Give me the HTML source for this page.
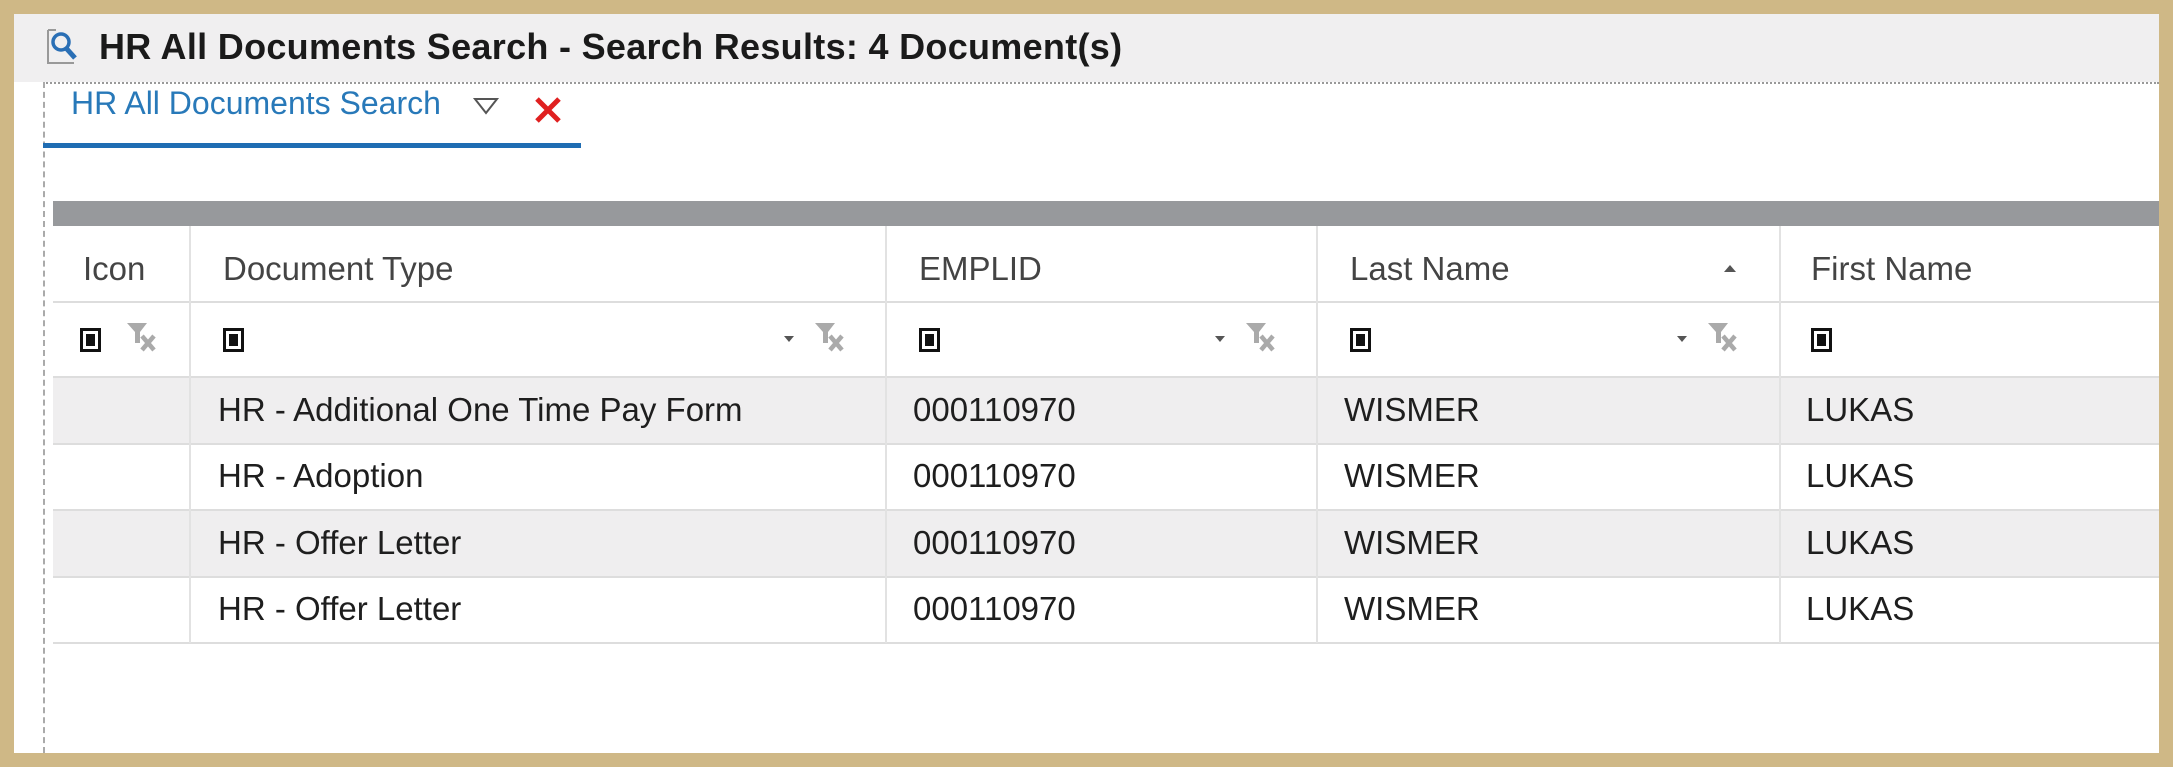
<!DOCTYPE html>
<html><head><meta charset="utf-8"><style>
*{margin:0;padding:0;box-sizing:border-box}
body{width:2173px;height:767px;background:#cfb886;position:relative;overflow:hidden;font-family:"Liberation Sans",sans-serif}
.a{position:absolute}
#win{left:14px;top:14px;width:2145px;height:739px;background:#fff}
.t{position:absolute;white-space:nowrap}
.hd{font-size:33px;color:#444}
.dt{font-size:33px;color:#1e1e1e}
.cb{position:absolute;width:21px;height:24px;border:3px solid #111;background:#fff}
.cb:after{content:"";position:absolute;left:3px;top:3px;width:9px;height:12px;background:#111}
.vl{position:absolute;width:2px;background:#e2e2e2;top:226px;height:417px}
.hl{position:absolute;left:53px;width:2106px;height:2px;background:#ddd}
</style></head><body>
<div class="a" id="win"></div>
<div class="a" style="left:14px;top:14px;width:2145px;height:68px;background:#f0eff0"></div>
<div class="a" style="left:43px;top:82px;width:2116px;border-top:2px dotted #999"></div>
<div class="a" style="left:43px;top:82px;height:671px;border-left:2px dashed #aaa"></div>
<svg class="a" style="left:44px;top:27px" width="42" height="40" viewBox="0 0 42 40"><path d="M4 3 L4 36 L30 36" fill="none" stroke="#999" stroke-width="2"/><path d="M4 3 L12 3" stroke="#999" stroke-width="2"/><circle cx="17" cy="15" r="8" fill="none" stroke="#2a6fb5" stroke-width="3.5"/><path d="M22 21 L31 31" stroke="#2a6fb5" stroke-width="5"/></svg>
<div class="t" style="left:99px;top:26px;font-size:36px;font-weight:bold;color:#1a1a1a;letter-spacing:0.3px">HR All Documents Search - Search Results: 4 Document(s)</div>
<div class="t" style="left:71px;top:85px;font-size:32px;color:#2879b9">HR All Documents Search</div>
<svg class="a" style="left:472px;top:96px" width="28" height="20"><path d="M3 3 L25 3 L14 17 Z" fill="none" stroke="#555" stroke-width="2"/></svg>
<svg class="a" style="left:533px;top:95px" width="30" height="30"><path d="M4 4 L26 26 M26 4 L4 26" stroke="#e02020" stroke-width="5"/></svg>
<div class="a" style="left:43px;top:143px;width:538px;height:5px;background:#1f6db3"></div>
<div class="a" style="left:53px;top:201px;width:2106px;height:25px;background:#97999c"></div>
<div class="a" style="left:53px;top:377px;width:2106px;height:67px;background:#efeeef"></div>
<div class="a" style="left:53px;top:510px;width:2106px;height:67px;background:#efeeef"></div>
<div class="hl" style="top:301px"></div><div class="hl" style="top:376px"></div><div class="hl" style="top:443px"></div><div class="hl" style="top:509px"></div><div class="hl" style="top:576px"></div><div class="hl" style="top:642px"></div>
<div class="vl" style="left:189px"></div><div class="vl" style="left:885px"></div><div class="vl" style="left:1316px"></div><div class="vl" style="left:1779px"></div>
<div class="t hd" style="left:83px;top:250px">Icon</div>
<div class="t hd" style="left:223px;top:250px">Document Type</div>
<div class="t hd" style="left:919px;top:250px">EMPLID</div>
<div class="t hd" style="left:1350px;top:250px">Last Name</div>
<div class="t hd" style="left:1811px;top:250px">First Name</div>
<svg class="a" style="left:1722px;top:262px" width="16" height="12"><path d="M2 10 L14 10 L8 3 Z" fill="#555"/></svg>
<div class="cb" style="left:80px;top:328px"></div>
<div class="cb" style="left:223px;top:328px"></div>
<div class="cb" style="left:919px;top:328px"></div>
<div class="cb" style="left:1350px;top:328px"></div>
<div class="cb" style="left:1811px;top:328px"></div>
<svg width="0" height="0" style="position:absolute"><defs><g id="fx"><path d="M0 0 L20 0 L13 9 L13 20 L8 20 L8 9 Z" fill="#aaa"/><path d="M15 13 L27 27 M27 13 L15 27" stroke="#aaa" stroke-width="4.5"/></g><g id="dd"><path d="M0 0 L10 0 L5 6 Z" fill="#555"/></g></defs></svg>
<svg class="a" style="left:127px;top:323px" width="32" height="32"><use href="#fx"/></svg>
<svg class="a" style="left:784px;top:336px" width="12" height="8"><use href="#dd"/></svg>
<svg class="a" style="left:815px;top:323px" width="32" height="32"><use href="#fx"/></svg>
<svg class="a" style="left:1215px;top:336px" width="12" height="8"><use href="#dd"/></svg>
<svg class="a" style="left:1246px;top:323px" width="32" height="32"><use href="#fx"/></svg>
<svg class="a" style="left:1677px;top:336px" width="12" height="8"><use href="#dd"/></svg>
<svg class="a" style="left:1708px;top:323px" width="32" height="32"><use href="#fx"/></svg>
<div class="t dt" style="left:218px;top:391px">HR - Additional One Time Pay Form</div>
<div class="t dt" style="left:218px;top:457px">HR - Adoption</div>
<div class="t dt" style="left:218px;top:524px">HR - Offer Letter</div>
<div class="t dt" style="left:218px;top:590px">HR - Offer Letter</div>
<div class="t dt" style="left:913px;top:391px">000110970</div><div class="t dt" style="left:913px;top:457px">000110970</div><div class="t dt" style="left:913px;top:524px">000110970</div><div class="t dt" style="left:913px;top:590px">000110970</div>
<div class="t dt" style="left:1344px;top:391px">WISMER</div><div class="t dt" style="left:1344px;top:457px">WISMER</div><div class="t dt" style="left:1344px;top:524px">WISMER</div><div class="t dt" style="left:1344px;top:590px">WISMER</div>
<div class="t dt" style="left:1806px;top:391px">LUKAS</div><div class="t dt" style="left:1806px;top:457px">LUKAS</div><div class="t dt" style="left:1806px;top:524px">LUKAS</div><div class="t dt" style="left:1806px;top:590px">LUKAS</div>
</body></html>
